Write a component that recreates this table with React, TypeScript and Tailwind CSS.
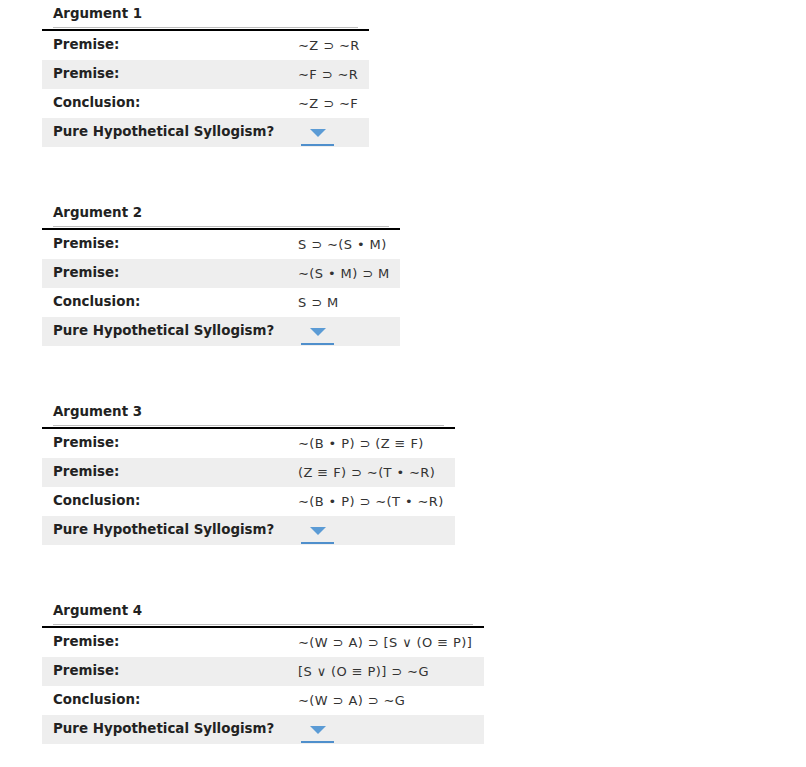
const args = [
  { title: 'Argument 1', width: 327, rows: ['∼Z ⊃ ∼R', '∼F ⊃ ∼R', '∼Z ⊃ ∼F'] },
  { title: 'Argument 2', width: 358, rows: ['S ⊃ ∼(S • M)', '∼(S • M) ⊃ M', 'S ⊃ M'] },
  { title: 'Argument 3', width: 413, rows: ['∼(B • P) ⊃ (Z ≡ F)', '(Z ≡ F) ⊃ ∼(T • ∼R)', '∼(B • P) ⊃ ∼(T • ∼R)'] },
  { title: 'Argument 4', width: 442, rows: ['∼(W ⊃ A) ⊃ [S ∨ (O ≡ P)]', '[S ∨ (O ≡ P)] ⊃ ∼G', '∼(W ⊃ A) ⊃ ∼G'] },
];

const labels = ['Premise:', 'Premise:', 'Conclusion:'];

function Dropdown() {
  return (
    <div className="ml-[3px] flex h-[27px] w-[33px] items-center justify-center border-b-2 border-[#4f8fcc]">
      <svg width="16" height="8" viewBox="0 0 16 8" className="mt-[3px]">
        <path d="M0 0 H16 L8 8 Z" fill="#5b9bd5" />
      </svg>
    </div>
  );
}

function Argument({ title, width, rows }: { title: string; width: number; rows: string[] }) {
  return (
    <section style={{ width }} className="mb-[54px]">
      <div className="mx-[11px] flex h-[26px] items-end border-b border-[#bdbdbd] pb-[3px] text-[13.4px] font-bold text-[#222]">
        {title}
      </div>
      <div className="mt-[1px] border-t-2 border-black">
        {rows.map((value, i) => (
          <div
            key={i}
            className={`flex h-[29px] items-center ${i % 2 === 1 ? 'bg-[#eeeeee]' : ''}`}
          >
            <div className="w-[256px] pl-[11px] text-[13.4px] font-bold text-[#222]">{labels[i]}</div>
            <div className="text-[13px] tracking-[0.4px] text-[#333]">{value}</div>
          </div>
        ))}
        <div className="flex h-[29px] items-center bg-[#eeeeee]">
          <div className="w-[256px] pl-[11px] text-[13.4px] font-bold text-[#222]">Pure Hypothetical Syllogism?</div>
          <Dropdown />
        </div>
      </div>
    </section>
  );
}

export default function App() {
  return (
    <div className="min-h-[767px] bg-white pl-[42px] pt-[2px] font-['DejaVu_Sans',sans-serif]">
      {args.map((a) => (
        <Argument key={a.title} {...a} />
      ))}
    </div>
  );
}
